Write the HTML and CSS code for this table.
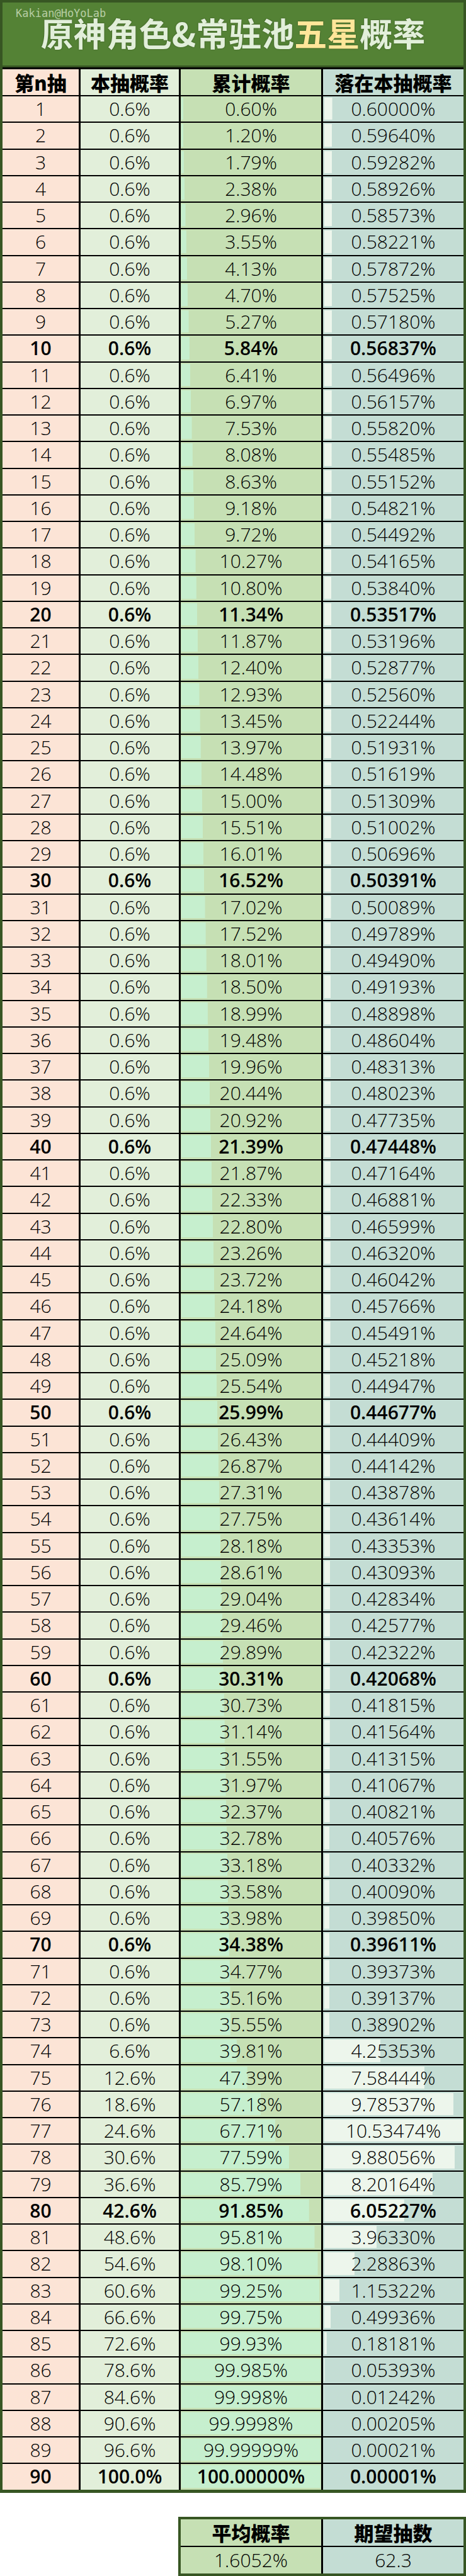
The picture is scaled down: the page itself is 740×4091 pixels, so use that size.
FILE: index.html
```html
<!DOCTYPE html>
<html lang="zh-CN">
<head>
<meta charset="utf-8">
<title>原神角色&amp;常驻池五星概率</title>
<link rel="stylesheet" href="styles.css">
</head>
<body>
<div class="sheet">
  <header class="banner">
    <div class="mark">Kakian@HoYoLab</div>
    <h1 class="title">原神角色&amp;常驻池<em>五星</em>概率</h1>
  </header>
  <div class="table">
    <div class="r h"><div class="c n">第n抽</div><div class="c p">本抽概率</div><div class="c g">累计概率</div><div class="c t">落在本抽概率</div></div>
    <div class="r"><div class="c n">1</div><div class="c p">0.6%</div><div class="c s" style="--w:0.60%">0.60%</div><div class="c f" style="--w:5.70%">0.60000%</div></div>
    <div class="r"><div class="c n">2</div><div class="c p">0.6%</div><div class="c s" style="--w:1.20%">1.20%</div><div class="c f" style="--w:5.66%">0.59640%</div></div>
    <div class="r"><div class="c n">3</div><div class="c p">0.6%</div><div class="c s" style="--w:1.79%">1.79%</div><div class="c f" style="--w:5.63%">0.59282%</div></div>
    <div class="r"><div class="c n">4</div><div class="c p">0.6%</div><div class="c s" style="--w:2.38%">2.38%</div><div class="c f" style="--w:5.59%">0.58926%</div></div>
    <div class="r"><div class="c n">5</div><div class="c p">0.6%</div><div class="c s" style="--w:2.96%">2.96%</div><div class="c f" style="--w:5.56%">0.58573%</div></div>
    <div class="r"><div class="c n">6</div><div class="c p">0.6%</div><div class="c s" style="--w:3.55%">3.55%</div><div class="c f" style="--w:5.53%">0.58221%</div></div>
    <div class="r"><div class="c n">7</div><div class="c p">0.6%</div><div class="c s" style="--w:4.13%">4.13%</div><div class="c f" style="--w:5.49%">0.57872%</div></div>
    <div class="r"><div class="c n">8</div><div class="c p">0.6%</div><div class="c s" style="--w:4.70%">4.70%</div><div class="c f" style="--w:5.46%">0.57525%</div></div>
    <div class="r"><div class="c n">9</div><div class="c p">0.6%</div><div class="c s" style="--w:5.27%">5.27%</div><div class="c f" style="--w:5.43%">0.57180%</div></div>
    <div class="r b"><div class="c n">10</div><div class="c p">0.6%</div><div class="c s" style="--w:5.84%">5.84%</div><div class="c f" style="--w:5.40%">0.56837%</div></div>
    <div class="r"><div class="c n">11</div><div class="c p">0.6%</div><div class="c s" style="--w:6.41%">6.41%</div><div class="c f" style="--w:5.36%">0.56496%</div></div>
    <div class="r"><div class="c n">12</div><div class="c p">0.6%</div><div class="c s" style="--w:6.97%">6.97%</div><div class="c f" style="--w:5.33%">0.56157%</div></div>
    <div class="r"><div class="c n">13</div><div class="c p">0.6%</div><div class="c s" style="--w:7.53%">7.53%</div><div class="c f" style="--w:5.30%">0.55820%</div></div>
    <div class="r"><div class="c n">14</div><div class="c p">0.6%</div><div class="c s" style="--w:8.08%">8.08%</div><div class="c f" style="--w:5.27%">0.55485%</div></div>
    <div class="r"><div class="c n">15</div><div class="c p">0.6%</div><div class="c s" style="--w:8.63%">8.63%</div><div class="c f" style="--w:5.24%">0.55152%</div></div>
    <div class="r"><div class="c n">16</div><div class="c p">0.6%</div><div class="c s" style="--w:9.18%">9.18%</div><div class="c f" style="--w:5.20%">0.54821%</div></div>
    <div class="r"><div class="c n">17</div><div class="c p">0.6%</div><div class="c s" style="--w:9.72%">9.72%</div><div class="c f" style="--w:5.17%">0.54492%</div></div>
    <div class="r"><div class="c n">18</div><div class="c p">0.6%</div><div class="c s" style="--w:10.27%">10.27%</div><div class="c f" style="--w:5.14%">0.54165%</div></div>
    <div class="r"><div class="c n">19</div><div class="c p">0.6%</div><div class="c s" style="--w:10.80%">10.80%</div><div class="c f" style="--w:5.11%">0.53840%</div></div>
    <div class="r b"><div class="c n">20</div><div class="c p">0.6%</div><div class="c s" style="--w:11.34%">11.34%</div><div class="c f" style="--w:5.08%">0.53517%</div></div>
    <div class="r"><div class="c n">21</div><div class="c p">0.6%</div><div class="c s" style="--w:11.87%">11.87%</div><div class="c f" style="--w:5.05%">0.53196%</div></div>
    <div class="r"><div class="c n">22</div><div class="c p">0.6%</div><div class="c s" style="--w:12.40%">12.40%</div><div class="c f" style="--w:5.02%">0.52877%</div></div>
    <div class="r"><div class="c n">23</div><div class="c p">0.6%</div><div class="c s" style="--w:12.93%">12.93%</div><div class="c f" style="--w:4.99%">0.52560%</div></div>
    <div class="r"><div class="c n">24</div><div class="c p">0.6%</div><div class="c s" style="--w:13.45%">13.45%</div><div class="c f" style="--w:4.96%">0.52244%</div></div>
    <div class="r"><div class="c n">25</div><div class="c p">0.6%</div><div class="c s" style="--w:13.97%">13.97%</div><div class="c f" style="--w:4.93%">0.51931%</div></div>
    <div class="r"><div class="c n">26</div><div class="c p">0.6%</div><div class="c s" style="--w:14.48%">14.48%</div><div class="c f" style="--w:4.90%">0.51619%</div></div>
    <div class="r"><div class="c n">27</div><div class="c p">0.6%</div><div class="c s" style="--w:15.00%">15.00%</div><div class="c f" style="--w:4.87%">0.51309%</div></div>
    <div class="r"><div class="c n">28</div><div class="c p">0.6%</div><div class="c s" style="--w:15.51%">15.51%</div><div class="c f" style="--w:4.84%">0.51002%</div></div>
    <div class="r"><div class="c n">29</div><div class="c p">0.6%</div><div class="c s" style="--w:16.01%">16.01%</div><div class="c f" style="--w:4.81%">0.50696%</div></div>
    <div class="r b"><div class="c n">30</div><div class="c p">0.6%</div><div class="c s" style="--w:16.52%">16.52%</div><div class="c f" style="--w:4.78%">0.50391%</div></div>
    <div class="r"><div class="c n">31</div><div class="c p">0.6%</div><div class="c s" style="--w:17.02%">17.02%</div><div class="c f" style="--w:4.76%">0.50089%</div></div>
    <div class="r"><div class="c n">32</div><div class="c p">0.6%</div><div class="c s" style="--w:17.52%">17.52%</div><div class="c f" style="--w:4.73%">0.49789%</div></div>
    <div class="r"><div class="c n">33</div><div class="c p">0.6%</div><div class="c s" style="--w:18.01%">18.01%</div><div class="c f" style="--w:4.70%">0.49490%</div></div>
    <div class="r"><div class="c n">34</div><div class="c p">0.6%</div><div class="c s" style="--w:18.50%">18.50%</div><div class="c f" style="--w:4.67%">0.49193%</div></div>
    <div class="r"><div class="c n">35</div><div class="c p">0.6%</div><div class="c s" style="--w:18.99%">18.99%</div><div class="c f" style="--w:4.64%">0.48898%</div></div>
    <div class="r"><div class="c n">36</div><div class="c p">0.6%</div><div class="c s" style="--w:19.48%">19.48%</div><div class="c f" style="--w:4.61%">0.48604%</div></div>
    <div class="r"><div class="c n">37</div><div class="c p">0.6%</div><div class="c s" style="--w:19.96%">19.96%</div><div class="c f" style="--w:4.59%">0.48313%</div></div>
    <div class="r"><div class="c n">38</div><div class="c p">0.6%</div><div class="c s" style="--w:20.44%">20.44%</div><div class="c f" style="--w:4.56%">0.48023%</div></div>
    <div class="r"><div class="c n">39</div><div class="c p">0.6%</div><div class="c s" style="--w:20.92%">20.92%</div><div class="c f" style="--w:4.53%">0.47735%</div></div>
    <div class="r b"><div class="c n">40</div><div class="c p">0.6%</div><div class="c s" style="--w:21.39%">21.39%</div><div class="c f" style="--w:4.50%">0.47448%</div></div>
    <div class="r"><div class="c n">41</div><div class="c p">0.6%</div><div class="c s" style="--w:21.87%">21.87%</div><div class="c f" style="--w:4.48%">0.47164%</div></div>
    <div class="r"><div class="c n">42</div><div class="c p">0.6%</div><div class="c s" style="--w:22.33%">22.33%</div><div class="c f" style="--w:4.45%">0.46881%</div></div>
    <div class="r"><div class="c n">43</div><div class="c p">0.6%</div><div class="c s" style="--w:22.80%">22.80%</div><div class="c f" style="--w:4.42%">0.46599%</div></div>
    <div class="r"><div class="c n">44</div><div class="c p">0.6%</div><div class="c s" style="--w:23.26%">23.26%</div><div class="c f" style="--w:4.40%">0.46320%</div></div>
    <div class="r"><div class="c n">45</div><div class="c p">0.6%</div><div class="c s" style="--w:23.72%">23.72%</div><div class="c f" style="--w:4.37%">0.46042%</div></div>
    <div class="r"><div class="c n">46</div><div class="c p">0.6%</div><div class="c s" style="--w:24.18%">24.18%</div><div class="c f" style="--w:4.34%">0.45766%</div></div>
    <div class="r"><div class="c n">47</div><div class="c p">0.6%</div><div class="c s" style="--w:24.64%">24.64%</div><div class="c f" style="--w:4.32%">0.45491%</div></div>
    <div class="r"><div class="c n">48</div><div class="c p">0.6%</div><div class="c s" style="--w:25.09%">25.09%</div><div class="c f" style="--w:4.29%">0.45218%</div></div>
    <div class="r"><div class="c n">49</div><div class="c p">0.6%</div><div class="c s" style="--w:25.54%">25.54%</div><div class="c f" style="--w:4.27%">0.44947%</div></div>
    <div class="r b"><div class="c n">50</div><div class="c p">0.6%</div><div class="c s" style="--w:25.99%">25.99%</div><div class="c f" style="--w:4.24%">0.44677%</div></div>
    <div class="r"><div class="c n">51</div><div class="c p">0.6%</div><div class="c s" style="--w:26.43%">26.43%</div><div class="c f" style="--w:4.22%">0.44409%</div></div>
    <div class="r"><div class="c n">52</div><div class="c p">0.6%</div><div class="c s" style="--w:26.87%">26.87%</div><div class="c f" style="--w:4.19%">0.44142%</div></div>
    <div class="r"><div class="c n">53</div><div class="c p">0.6%</div><div class="c s" style="--w:27.31%">27.31%</div><div class="c f" style="--w:4.17%">0.43878%</div></div>
    <div class="r"><div class="c n">54</div><div class="c p">0.6%</div><div class="c s" style="--w:27.75%">27.75%</div><div class="c f" style="--w:4.14%">0.43614%</div></div>
    <div class="r"><div class="c n">55</div><div class="c p">0.6%</div><div class="c s" style="--w:28.18%">28.18%</div><div class="c f" style="--w:4.12%">0.43353%</div></div>
    <div class="r"><div class="c n">56</div><div class="c p">0.6%</div><div class="c s" style="--w:28.61%">28.61%</div><div class="c f" style="--w:4.09%">0.43093%</div></div>
    <div class="r"><div class="c n">57</div><div class="c p">0.6%</div><div class="c s" style="--w:29.04%">29.04%</div><div class="c f" style="--w:4.07%">0.42834%</div></div>
    <div class="r"><div class="c n">58</div><div class="c p">0.6%</div><div class="c s" style="--w:29.46%">29.46%</div><div class="c f" style="--w:4.04%">0.42577%</div></div>
    <div class="r"><div class="c n">59</div><div class="c p">0.6%</div><div class="c s" style="--w:29.89%">29.89%</div><div class="c f" style="--w:4.02%">0.42322%</div></div>
    <div class="r b"><div class="c n">60</div><div class="c p">0.6%</div><div class="c s" style="--w:30.31%">30.31%</div><div class="c f" style="--w:3.99%">0.42068%</div></div>
    <div class="r"><div class="c n">61</div><div class="c p">0.6%</div><div class="c s" style="--w:30.73%">30.73%</div><div class="c f" style="--w:3.97%">0.41815%</div></div>
    <div class="r"><div class="c n">62</div><div class="c p">0.6%</div><div class="c s" style="--w:31.14%">31.14%</div><div class="c f" style="--w:3.95%">0.41564%</div></div>
    <div class="r"><div class="c n">63</div><div class="c p">0.6%</div><div class="c s" style="--w:31.55%">31.55%</div><div class="c f" style="--w:3.92%">0.41315%</div></div>
    <div class="r"><div class="c n">64</div><div class="c p">0.6%</div><div class="c s" style="--w:31.97%">31.97%</div><div class="c f" style="--w:3.90%">0.41067%</div></div>
    <div class="r"><div class="c n">65</div><div class="c p">0.6%</div><div class="c s" style="--w:32.37%">32.37%</div><div class="c f" style="--w:3.88%">0.40821%</div></div>
    <div class="r"><div class="c n">66</div><div class="c p">0.6%</div><div class="c s" style="--w:32.78%">32.78%</div><div class="c f" style="--w:3.85%">0.40576%</div></div>
    <div class="r"><div class="c n">67</div><div class="c p">0.6%</div><div class="c s" style="--w:33.18%">33.18%</div><div class="c f" style="--w:3.83%">0.40332%</div></div>
    <div class="r"><div class="c n">68</div><div class="c p">0.6%</div><div class="c s" style="--w:33.58%">33.58%</div><div class="c f" style="--w:3.81%">0.40090%</div></div>
    <div class="r"><div class="c n">69</div><div class="c p">0.6%</div><div class="c s" style="--w:33.98%">33.98%</div><div class="c f" style="--w:3.78%">0.39850%</div></div>
    <div class="r b"><div class="c n">70</div><div class="c p">0.6%</div><div class="c s" style="--w:34.38%">34.38%</div><div class="c f" style="--w:3.76%">0.39611%</div></div>
    <div class="r"><div class="c n">71</div><div class="c p">0.6%</div><div class="c s" style="--w:34.77%">34.77%</div><div class="c f" style="--w:3.74%">0.39373%</div></div>
    <div class="r"><div class="c n">72</div><div class="c p">0.6%</div><div class="c s" style="--w:35.16%">35.16%</div><div class="c f" style="--w:3.72%">0.39137%</div></div>
    <div class="r"><div class="c n">73</div><div class="c p">0.6%</div><div class="c s" style="--w:35.55%">35.55%</div><div class="c f" style="--w:3.69%">0.38902%</div></div>
    <div class="r"><div class="c n">74</div><div class="c p">6.6%</div><div class="c s" style="--w:39.81%">39.81%</div><div class="c f" style="--w:40.38%">4.25353%</div></div>
    <div class="r"><div class="c n">75</div><div class="c p">12.6%</div><div class="c s" style="--w:47.39%">47.39%</div><div class="c f" style="--w:72.00%">7.58444%</div></div>
    <div class="r"><div class="c n">76</div><div class="c p">18.6%</div><div class="c s" style="--w:57.18%">57.18%</div><div class="c f" style="--w:92.89%">9.78537%</div></div>
    <div class="r"><div class="c n">77</div><div class="c p">24.6%</div><div class="c s" style="--w:67.71%">67.71%</div><div class="c f" style="--w:100%">10.53474%</div></div>
    <div class="r"><div class="c n">78</div><div class="c p">30.6%</div><div class="c s" style="--w:77.59%">77.59%</div><div class="c f" style="--w:93.79%">9.88056%</div></div>
    <div class="r"><div class="c n">79</div><div class="c p">36.6%</div><div class="c s" style="--w:85.79%">85.79%</div><div class="c f" style="--w:77.85%">8.20164%</div></div>
    <div class="r b"><div class="c n">80</div><div class="c p">42.6%</div><div class="c s" style="--w:91.85%">91.85%</div><div class="c f" style="--w:57.45%">6.05227%</div></div>
    <div class="r"><div class="c n">81</div><div class="c p">48.6%</div><div class="c s" style="--w:95.81%">95.81%</div><div class="c f" style="--w:37.62%">3.96330%</div></div>
    <div class="r"><div class="c n">82</div><div class="c p">54.6%</div><div class="c s" style="--w:98.10%">98.10%</div><div class="c f" style="--w:21.73%">2.28863%</div></div>
    <div class="r"><div class="c n">83</div><div class="c p">60.6%</div><div class="c s" style="--w:99.25%">99.25%</div><div class="c f" style="--w:10.95%">1.15322%</div></div>
    <div class="r"><div class="c n">84</div><div class="c p">66.6%</div><div class="c s" style="--w:99.75%">99.75%</div><div class="c f" style="--w:4.74%">0.49936%</div></div>
    <div class="r"><div class="c n">85</div><div class="c p">72.6%</div><div class="c s" style="--w:99.93%">99.93%</div><div class="c f" style="--w:1.73%">0.18181%</div></div>
    <div class="r"><div class="c n">86</div><div class="c p">78.6%</div><div class="c s" style="--w:99.985%">99.985%</div><div class="c f" style="--w:0.51%">0.05393%</div></div>
    <div class="r"><div class="c n">87</div><div class="c p">84.6%</div><div class="c s" style="--w:99.998%">99.998%</div><div class="c f" style="--w:0.12%">0.01242%</div></div>
    <div class="r"><div class="c n">88</div><div class="c p">90.6%</div><div class="c s" style="--w:99.9998%">99.9998%</div><div class="c f" style="--w:0.02%">0.00205%</div></div>
    <div class="r"><div class="c n">89</div><div class="c p">96.6%</div><div class="c s" style="--w:99.99999%">99.99999%</div><div class="c f" style="--w:0%">0.00021%</div></div>
    <div class="r b"><div class="c n">90</div><div class="c p">100.0%</div><div class="c s" style="--w:100%">100.00000%</div><div class="c f" style="--w:0%">0.00001%</div></div>
  </div>
</div>
<div class="summary">
  <div class="sgrid">
    <div class="c g hd">平均概率</div><div class="c t hd">期望抽数</div>
    <div class="c g">1.6052%</div><div class="c t">62.3</div>
  </div>
</div>
</body>
</html>
```

FILE: styles.css
```css
html, body {
  margin: 0;
  padding: 0;
  background: #ffffff;
}

body {
  width: 740px;
}

.sheet {
  background: #375623;
  padding: 4px 4px 5px;
}

.banner {
  box-sizing: border-box;
  height: 100px;
  padding-top: 10px;
  background: #548235;
}

.mark {
  margin-left: 21px;
  font-family: "DejaVu Sans Mono", monospace;
  font-size: 17px;
  font-weight: 400;
  line-height: 14px;
  color: #b7cda4;
}

.title {
  margin: 0;
  text-align: center;
  font-family: "Noto Sans CJK SC", sans-serif;
  font-size: 52px;
  font-weight: 700;
  line-height: 48px;
  color: #e2efda;
  text-shadow: 0 0 2px rgba(30, 50, 15, 0.7);
}

.title em {
  font-style: normal;
  color: #ffe699;
}

.table {
  margin-top: 3px;
  padding-top: 3px;
  background: #000;
  display: grid;
  grid-template-columns: 121px 156px 223px 223px;
  grid-template-rows: 41px;
  grid-auto-rows: 40.25px;
  gap: 2px 3px;
}

.r {
  display: contents;
}

.c {
  display: flex;
  align-items: center;
  justify-content: center;
  font-family: "Open Sans", "Noto Sans CJK SC", sans-serif;
  font-size: 30px;
  font-weight: 300;
  line-height: 36px;
  color: #000;
  white-space: nowrap;
}

.b .c {
  font-weight: 600;
}

.h .c,
.hd {
  font-family: "Noto Sans CJK SC", sans-serif;
  font-size: 31px;
  font-weight: 900;
  line-height: 38px;
}

.n {
  background: #fce4d6;
}

.p {
  background: #e2efda;
}

.g {
  background: #c6e0b4;
}

.t {
  background: #c4ddd4;
}

.s {
  background:
    linear-gradient(#c6efce, #c6efce) 1px 2px / max(3px, calc(var(--w) * 0.99)) calc(100% - 5px) no-repeat,
    #c6e0b4;
}

.f {
  background:
    linear-gradient(#edf6ec, #edf6ec) 2px 2px / calc(var(--w) * 0.99) calc(100% - 5px) no-repeat,
    #c4ddd4;
}

.summary {
  margin: 38px 0 0 283px;
  background: #375623;
  padding: 4px;
}

.sgrid {
  background: #000;
  display: grid;
  grid-template-columns: 223px 223px;
  grid-template-rows: 42px 42px;
  gap: 2px 3px;
}
```
